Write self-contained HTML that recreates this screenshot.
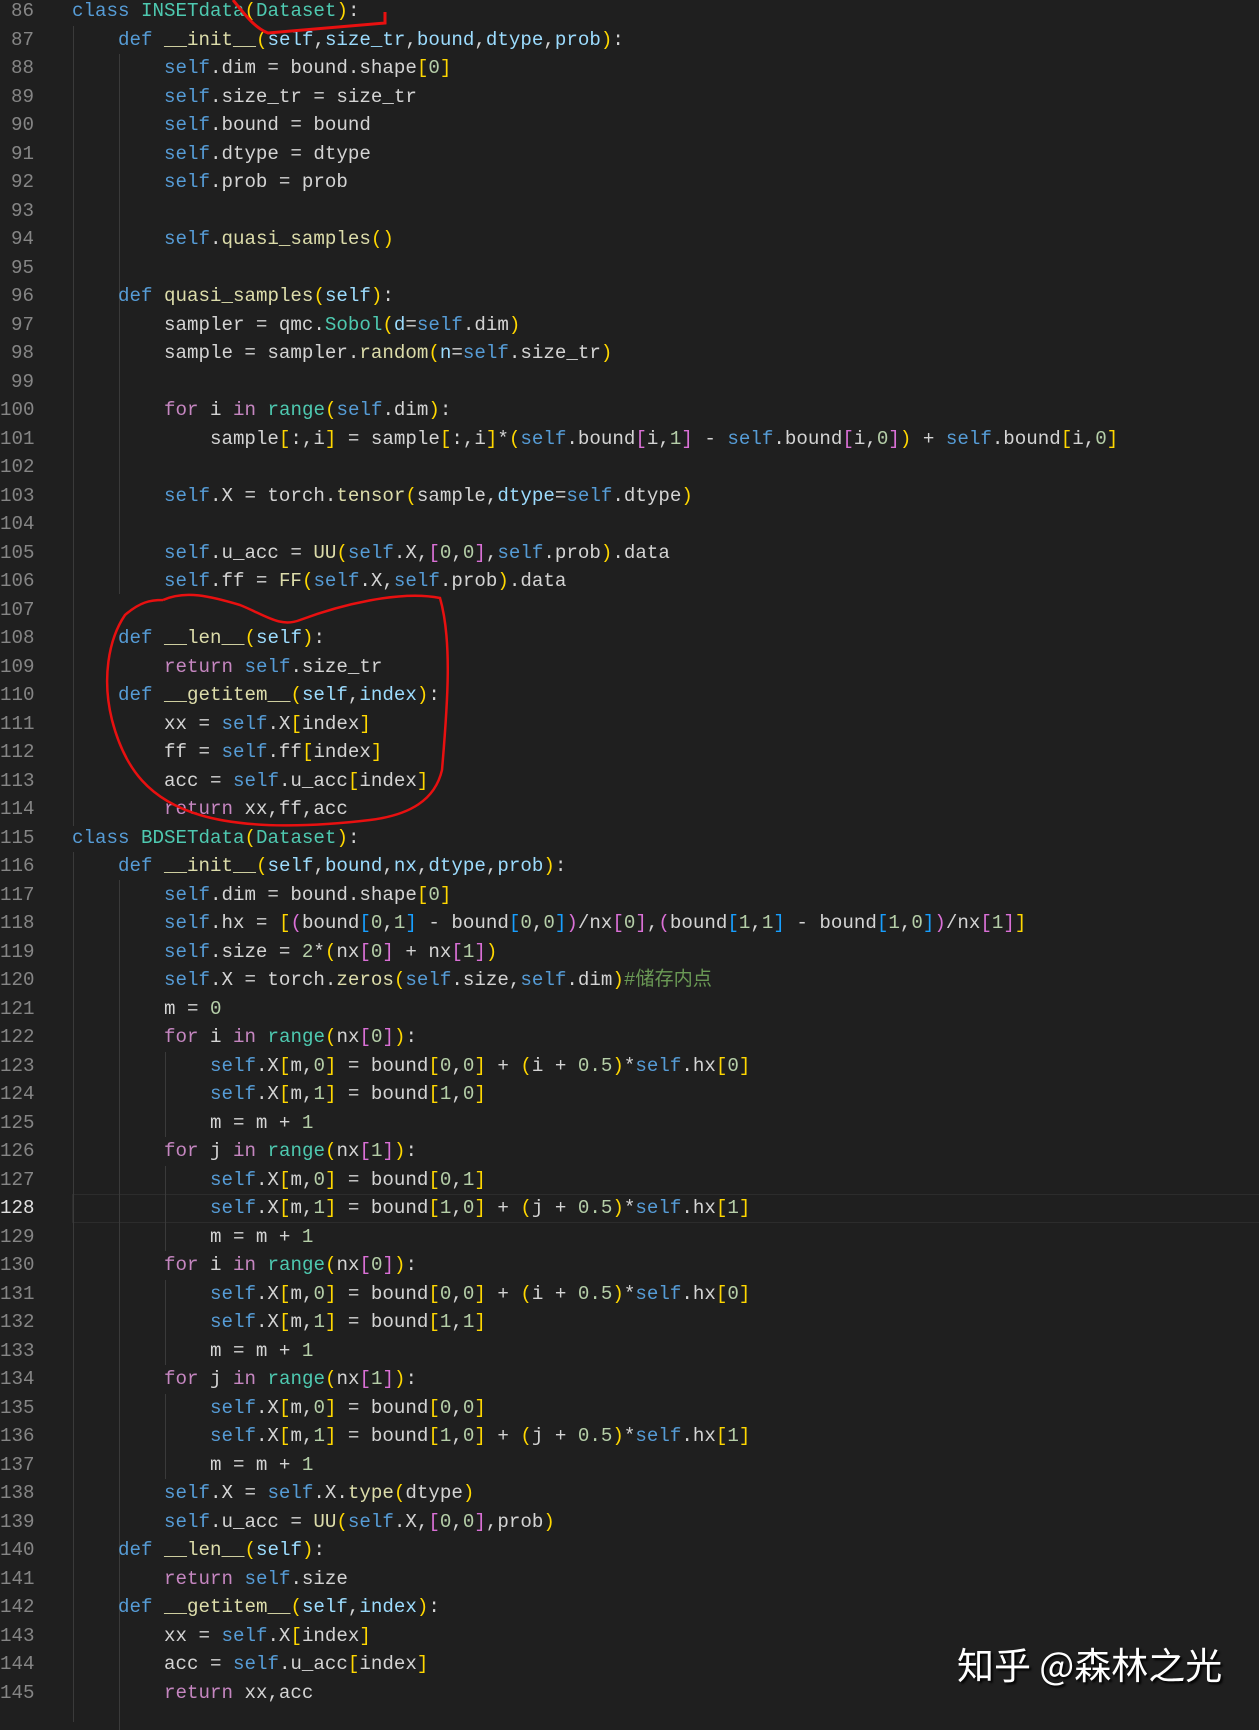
<!DOCTYPE html>
<html><head><meta charset="utf-8"><style>
html,body{margin:0;padding:0;background:#1f1f1f;}
body{width:1259px;height:1713px;overflow:hidden;position:relative;}
#code{position:absolute;left:0;top:-3px;font-family:"Liberation Mono","Noto Sans CJK SC",monospace;font-size:19.17px;line-height:28.5px;color:#d4d4d4;}
.l{height:28.5px;position:relative;white-space:pre;}
.ln{display:inline-block;width:34px;text-align:right;color:#858585;margin-right:38px;}
.cur{color:#e0e0e0;}
.k{color:#569cd6}.c{color:#4ec9b0}.f{color:#dcdcaa}.p{color:#c586c0}.y{color:#ffd700}.o{color:#da70d6}.b{color:#179fff}.n{color:#b5cea8}.v{color:#9cdcfe}.m{color:#6a9955}
.hl{position:absolute;left:72px;top:1194px;width:1200px;height:27px;border:1px solid #2c2c2c;}
.g{position:absolute;width:1px;background:#3a3a3a;}
.wm{position:absolute;left:957px;top:1636px;font-family:"Noto Sans CJK SC",sans-serif;font-size:37px;color:#fff;text-shadow:2px 2px 2px #000;}
</style></head><body>
<div class="hl"></div>
<div class="g" style="left:73px;top:26px;height:800px"></div>
<div class="g" style="left:119px;top:54px;height:540px"></div>
<div class="g" style="left:73px;top:852px;height:870px"></div>
<div class="g" style="left:119px;top:880px;height:850px"></div>
<div class="g" style="left:165px;top:1052px;height:85px"></div>
<div class="g" style="left:165px;top:1166px;height:85px"></div>
<div class="g" style="left:165px;top:1280px;height:85px"></div>
<div class="g" style="left:165px;top:1394px;height:85px"></div>
<div id="code"><div class="l"><span class="ln">86</span><span class="k">class</span> <span class="c">INSETdata</span><span class="y">(</span><span class="c">Dataset</span><span class="y">)</span>:</div><div class="l"><span class="ln">87</span>    <span class="k">def</span> <span class="f">__init__</span><span class="y">(</span><span class="v">self</span>,<span class="v">size_tr</span>,<span class="v">bound</span>,<span class="v">dtype</span>,<span class="v">prob</span><span class="y">)</span>:</div><div class="l"><span class="ln">88</span>        <span class="k">self</span>.dim = bound.shape<span class="y">[</span><span class="n">0</span><span class="y">]</span></div><div class="l"><span class="ln">89</span>        <span class="k">self</span>.size_tr = size_tr</div><div class="l"><span class="ln">90</span>        <span class="k">self</span>.bound = bound</div><div class="l"><span class="ln">91</span>        <span class="k">self</span>.dtype = dtype</div><div class="l"><span class="ln">92</span>        <span class="k">self</span>.prob = prob</div><div class="l"><span class="ln">93</span></div><div class="l"><span class="ln">94</span>        <span class="k">self</span>.<span class="f">quasi_samples</span><span class="y">()</span></div><div class="l"><span class="ln">95</span></div><div class="l"><span class="ln">96</span>    <span class="k">def</span> <span class="f">quasi_samples</span><span class="y">(</span><span class="v">self</span><span class="y">)</span>:</div><div class="l"><span class="ln">97</span>        sampler = qmc.<span class="c">Sobol</span><span class="y">(</span><span class="v">d</span>=<span class="k">self</span>.dim<span class="y">)</span></div><div class="l"><span class="ln">98</span>        sample = sampler.<span class="f">random</span><span class="y">(</span><span class="v">n</span>=<span class="k">self</span>.size_tr<span class="y">)</span></div><div class="l"><span class="ln">99</span></div><div class="l"><span class="ln">100</span>        <span class="p">for</span> i <span class="p">in</span> <span class="c">range</span><span class="y">(</span><span class="k">self</span>.dim<span class="y">)</span>:</div><div class="l"><span class="ln">101</span>            sample<span class="y">[</span>:,i<span class="y">]</span> = sample<span class="y">[</span>:,i<span class="y">]</span>*<span class="y">(</span><span class="k">self</span>.bound<span class="o">[</span>i,<span class="n">1</span><span class="o">]</span> - <span class="k">self</span>.bound<span class="o">[</span>i,<span class="n">0</span><span class="o">]</span><span class="y">)</span> + <span class="k">self</span>.bound<span class="y">[</span>i,<span class="n">0</span><span class="y">]</span></div><div class="l"><span class="ln">102</span></div><div class="l"><span class="ln">103</span>        <span class="k">self</span>.X = torch.<span class="f">tensor</span><span class="y">(</span>sample,<span class="v">dtype</span>=<span class="k">self</span>.dtype<span class="y">)</span></div><div class="l"><span class="ln">104</span></div><div class="l"><span class="ln">105</span>        <span class="k">self</span>.u_acc = <span class="f">UU</span><span class="y">(</span><span class="k">self</span>.X,<span class="o">[</span><span class="n">0</span>,<span class="n">0</span><span class="o">]</span>,<span class="k">self</span>.prob<span class="y">)</span>.data</div><div class="l"><span class="ln">106</span>        <span class="k">self</span>.ff = <span class="f">FF</span><span class="y">(</span><span class="k">self</span>.X,<span class="k">self</span>.prob<span class="y">)</span>.data</div><div class="l"><span class="ln">107</span></div><div class="l"><span class="ln">108</span>    <span class="k">def</span> <span class="f">__len__</span><span class="y">(</span><span class="v">self</span><span class="y">)</span>:</div><div class="l"><span class="ln">109</span>        <span class="p">return</span> <span class="k">self</span>.size_tr</div><div class="l"><span class="ln">110</span>    <span class="k">def</span> <span class="f">__getitem__</span><span class="y">(</span><span class="v">self</span>,<span class="v">index</span><span class="y">)</span>:</div><div class="l"><span class="ln">111</span>        xx = <span class="k">self</span>.X<span class="y">[</span>index<span class="y">]</span></div><div class="l"><span class="ln">112</span>        ff = <span class="k">self</span>.ff<span class="y">[</span>index<span class="y">]</span></div><div class="l"><span class="ln">113</span>        acc = <span class="k">self</span>.u_acc<span class="y">[</span>index<span class="y">]</span></div><div class="l"><span class="ln">114</span>        <span class="p">return</span> xx,ff,acc</div><div class="l"><span class="ln">115</span><span class="k">class</span> <span class="c">BDSETdata</span><span class="y">(</span><span class="c">Dataset</span><span class="y">)</span>:</div><div class="l"><span class="ln">116</span>    <span class="k">def</span> <span class="f">__init__</span><span class="y">(</span><span class="v">self</span>,<span class="v">bound</span>,<span class="v">nx</span>,<span class="v">dtype</span>,<span class="v">prob</span><span class="y">)</span>:</div><div class="l"><span class="ln">117</span>        <span class="k">self</span>.dim = bound.shape<span class="y">[</span><span class="n">0</span><span class="y">]</span></div><div class="l"><span class="ln">118</span>        <span class="k">self</span>.hx = <span class="y">[</span><span class="o">(</span>bound<span class="b">[</span><span class="n">0</span>,<span class="n">1</span><span class="b">]</span> - bound<span class="b">[</span><span class="n">0</span>,<span class="n">0</span><span class="b">]</span><span class="o">)</span>/nx<span class="o">[</span><span class="n">0</span><span class="o">]</span>,<span class="o">(</span>bound<span class="b">[</span><span class="n">1</span>,<span class="n">1</span><span class="b">]</span> - bound<span class="b">[</span><span class="n">1</span>,<span class="n">0</span><span class="b">]</span><span class="o">)</span>/nx<span class="o">[</span><span class="n">1</span><span class="o">]</span><span class="y">]</span></div><div class="l"><span class="ln">119</span>        <span class="k">self</span>.size = <span class="n">2</span>*<span class="y">(</span>nx<span class="o">[</span><span class="n">0</span><span class="o">]</span> + nx<span class="o">[</span><span class="n">1</span><span class="o">]</span><span class="y">)</span></div><div class="l"><span class="ln">120</span>        <span class="k">self</span>.X = torch.<span class="f">zeros</span><span class="y">(</span><span class="k">self</span>.size,<span class="k">self</span>.dim<span class="y">)</span><span class="m">#储存内点</span></div><div class="l"><span class="ln">121</span>        m = <span class="n">0</span></div><div class="l"><span class="ln">122</span>        <span class="p">for</span> i <span class="p">in</span> <span class="c">range</span><span class="y">(</span>nx<span class="o">[</span><span class="n">0</span><span class="o">]</span><span class="y">)</span>:</div><div class="l"><span class="ln">123</span>            <span class="k">self</span>.X<span class="y">[</span>m,<span class="n">0</span><span class="y">]</span> = bound<span class="y">[</span><span class="n">0</span>,<span class="n">0</span><span class="y">]</span> + <span class="y">(</span>i + <span class="n">0.5</span><span class="y">)</span>*<span class="k">self</span>.hx<span class="y">[</span><span class="n">0</span><span class="y">]</span></div><div class="l"><span class="ln">124</span>            <span class="k">self</span>.X<span class="y">[</span>m,<span class="n">1</span><span class="y">]</span> = bound<span class="y">[</span><span class="n">1</span>,<span class="n">0</span><span class="y">]</span></div><div class="l"><span class="ln">125</span>            m = m + <span class="n">1</span></div><div class="l"><span class="ln">126</span>        <span class="p">for</span> j <span class="p">in</span> <span class="c">range</span><span class="y">(</span>nx<span class="o">[</span><span class="n">1</span><span class="o">]</span><span class="y">)</span>:</div><div class="l"><span class="ln">127</span>            <span class="k">self</span>.X<span class="y">[</span>m,<span class="n">0</span><span class="y">]</span> = bound<span class="y">[</span><span class="n">0</span>,<span class="n">1</span><span class="y">]</span></div><div class="l"><span class="ln cur">128</span>            <span class="k">self</span>.X<span class="y">[</span>m,<span class="n">1</span><span class="y">]</span> = bound<span class="y">[</span><span class="n">1</span>,<span class="n">0</span><span class="y">]</span> + <span class="y">(</span>j + <span class="n">0.5</span><span class="y">)</span>*<span class="k">self</span>.hx<span class="y">[</span><span class="n">1</span><span class="y">]</span></div><div class="l"><span class="ln">129</span>            m = m + <span class="n">1</span></div><div class="l"><span class="ln">130</span>        <span class="p">for</span> i <span class="p">in</span> <span class="c">range</span><span class="y">(</span>nx<span class="o">[</span><span class="n">0</span><span class="o">]</span><span class="y">)</span>:</div><div class="l"><span class="ln">131</span>            <span class="k">self</span>.X<span class="y">[</span>m,<span class="n">0</span><span class="y">]</span> = bound<span class="y">[</span><span class="n">0</span>,<span class="n">0</span><span class="y">]</span> + <span class="y">(</span>i + <span class="n">0.5</span><span class="y">)</span>*<span class="k">self</span>.hx<span class="y">[</span><span class="n">0</span><span class="y">]</span></div><div class="l"><span class="ln">132</span>            <span class="k">self</span>.X<span class="y">[</span>m,<span class="n">1</span><span class="y">]</span> = bound<span class="y">[</span><span class="n">1</span>,<span class="n">1</span><span class="y">]</span></div><div class="l"><span class="ln">133</span>            m = m + <span class="n">1</span></div><div class="l"><span class="ln">134</span>        <span class="p">for</span> j <span class="p">in</span> <span class="c">range</span><span class="y">(</span>nx<span class="o">[</span><span class="n">1</span><span class="o">]</span><span class="y">)</span>:</div><div class="l"><span class="ln">135</span>            <span class="k">self</span>.X<span class="y">[</span>m,<span class="n">0</span><span class="y">]</span> = bound<span class="y">[</span><span class="n">0</span>,<span class="n">0</span><span class="y">]</span></div><div class="l"><span class="ln">136</span>            <span class="k">self</span>.X<span class="y">[</span>m,<span class="n">1</span><span class="y">]</span> = bound<span class="y">[</span><span class="n">1</span>,<span class="n">0</span><span class="y">]</span> + <span class="y">(</span>j + <span class="n">0.5</span><span class="y">)</span>*<span class="k">self</span>.hx<span class="y">[</span><span class="n">1</span><span class="y">]</span></div><div class="l"><span class="ln">137</span>            m = m + <span class="n">1</span></div><div class="l"><span class="ln">138</span>        <span class="k">self</span>.X = <span class="k">self</span>.X.<span class="f">type</span><span class="y">(</span>dtype<span class="y">)</span></div><div class="l"><span class="ln">139</span>        <span class="k">self</span>.u_acc = <span class="f">UU</span><span class="y">(</span><span class="k">self</span>.X,<span class="o">[</span><span class="n">0</span>,<span class="n">0</span><span class="o">]</span>,prob<span class="y">)</span></div><div class="l"><span class="ln">140</span>    <span class="k">def</span> <span class="f">__len__</span><span class="y">(</span><span class="v">self</span><span class="y">)</span>:</div><div class="l"><span class="ln">141</span>        <span class="p">return</span> <span class="k">self</span>.size</div><div class="l"><span class="ln">142</span>    <span class="k">def</span> <span class="f">__getitem__</span><span class="y">(</span><span class="v">self</span>,<span class="v">index</span><span class="y">)</span>:</div><div class="l"><span class="ln">143</span>        xx = <span class="k">self</span>.X<span class="y">[</span>index<span class="y">]</span></div><div class="l"><span class="ln">144</span>        acc = <span class="k">self</span>.u_acc<span class="y">[</span>index<span class="y">]</span></div><div class="l"><span class="ln">145</span>        <span class="p">return</span> xx,acc</div></div>
<svg style="position:absolute;left:0;top:0" width="1259" height="1713">
<path d="M233 0 C245 15 255 28 268 33 L385 23 L385 12" stroke="#e81010" stroke-width="3" fill="none"/>
<path d="M163 600 C185 590 210 596 240 605 C265 615 280 628 300 620 C340 605 400 590 440 598 C452 640 448 700 442 770 C435 800 410 815 370 820 C320 826 250 830 200 815 C150 800 125 770 112 720 C102 680 108 640 125 615 C140 602 150 600 163 600" stroke="#e81010" stroke-width="2.5" fill="none"/>
</svg>
<div class="wm">知乎 @森林之光</div>
</body></html>
